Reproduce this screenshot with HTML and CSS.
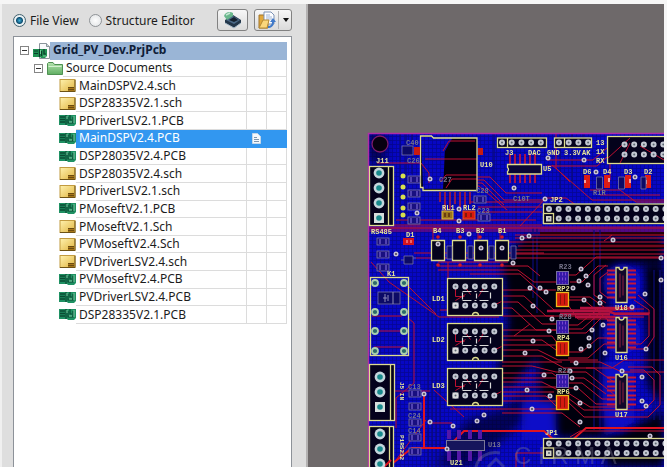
FILE: index.html
```
<!DOCTYPE html>
<html lang="en">
<head>
    <meta charset="UTF-8">
    <meta name="viewport" content="width=device-width, initial-scale=1.0">
    <title>Grid_PV_Dev.PrjPcb</title>
    <link rel="stylesheet" href="styles.css">
</head>
<body>

<!-- Shared icons -->
<svg class="sprite" aria-hidden="true">
    <defs>
        <linearGradient id="sheetFill" x1="0" y1="0" x2="1" y2="1">
            <stop offset="0" stop-color="#fff2ae"/>
            <stop offset="1" stop-color="#e0b440"/>
        </linearGradient>
        <linearGradient id="folderFill" x1="0" y1="0" x2="0" y2="1">
            <stop offset="0" stop-color="#b5e3ae"/>
            <stop offset="1" stop-color="#5fae62"/>
        </linearGradient>
        <symbol id="icon-sch" viewBox="0 0 17 13">
            <rect x="1" y="0.5" width="15" height="12" fill="url(#sheetFill)" stroke="#c29b40"/>
            <path d="M1 12.5h15V1" fill="none" stroke="#6d5214"/>
            <path d="M9 8h6v4H9z" fill="#a87618"/>
            <path d="M9 8.500h6M9 10.500h6" stroke="#6b4c10"/>
        </symbol>
        <symbol id="icon-pcb" viewBox="0 0 17 13">
            <path d="M0 1h17v9l-2 2H9l-1-1H0z" fill="#1f9163"/>
            <path d="M1 3h5M1 5.500h5M1 8h5" stroke="#0b4a33" stroke-width="1.300"/>
            <path d="M7 1v10M9 3v6h5V3M11 1v5h2" fill="none" stroke="#0a4a33" stroke-width="1.200"/>
            <path d="M10 8h3M15 2v7M8 2v3" stroke="#7cc9a2"/>
        </symbol>
        <symbol id="icon-folder" viewBox="0 0 16 13">
            <path d="M0.500 12.500v-11l1-1h4.500l1.500 2h8v10z" fill="url(#folderFill)" stroke="#4f9152"/>
            <path d="M1.500 4.500h13" stroke="#d4f0cf"/>
        </symbol>
        <symbol id="icon-project" viewBox="0 0 17 16">
            <path d="M6.500 0.500h7l3 3v12h-10z" fill="#f8fafb" stroke="#8a949b"/>
            <path d="M13.500 0.500v3h3" fill="#cdd5da" stroke="#8a949b"/>
            <path d="M0 6h14v7l-2 2H8l-1-1H0z" fill="#1f9152"/>
            <path d="M1 8h4M1 10.500h4M6.500 6v8M8.500 8v5M11 6v5h2" fill="none" stroke="#0b3d2b" stroke-width="1.200"/>
            <path d="M10 13h3M7.500 7v4" stroke="#6fce96"/>
        </symbol>
    </defs>
</svg>

<main class="workspace">
    <section class="panel">
        <div class="toolbar">
            <label class="view-option"><input type="radio" name="view" checked> File View</label>
            <label class="view-option"><input type="radio" name="view"> Structure Editor</label>
            <div class="toolbar-buttons">
                <button class="tool-btn" aria-label="Compile">
                    <svg width="20" height="18" viewBox="0 0 20 18">
                        <path d="M2 9l8-5 8 5v3l-7 5-9-5z" fill="#24374a"/>
                        <path d="M2 12l9 5 7-5" fill="none" stroke="#a9bccb"/>
                        <path d="M3 9l7-4 7 4-6 4z" fill="#4b6a88"/>
                        <path d="M6 9l5-3 4 3-4 2z" fill="#15212e"/>
                        <path d="M1 5c1-4 6-5 9-3v3l-6 4z" fill="#69b78c"/>
                        <path d="M3 4l4-2" stroke="#c5e6d3" stroke-width="1.500"/>
                    </svg>
                </button>
                <button class="tool-btn tool-btn-split" aria-label="Open document">
                    <svg width="18" height="18" viewBox="0 0 18 18">
                        <path d="M1 4h5l1 2h3v11H1z" fill="#e2a83a" stroke="#a0752b"/>
                        <path d="M6 1h7l3 3v9H6z" fill="#fdfdff" stroke="#7d93b5"/>
                        <path d="M8 4h4M8 6h6M8 8h6" stroke="#9db4d5"/>
                        <path d="M1 17l4-8h6l-2 8z" fill="#fbd77b" stroke="#b58935"/>
                        <path d="M10 15c3 0 4-2 4-4h-2l3-4 3 4h-2c0 4-3 6-6 6z" fill="#3f79c9"/>
                    </svg>
                    <span class="split-line"></span>
                    <span class="caret"></span>
                </button>
            </div>
        </div>

        <div class="tree-box">
            <table class="tree">
                <colgroup>
                    <col class="col-root"><col class="col-folder"><col class="col-file"><col>
                    <col class="col-status"><col class="col-status">
                </colgroup>
                <tbody>
                    <tr class="root">
                        <td class="lead"><button class="toggle" aria-label="Collapse project"></button><svg width="17" height="16"><use href="#icon-project"/></svg></td>
                        <td class="name" colspan="5">Grid_PV_Dev.PrjPcb</td>
                    </tr>
                    <tr>
                        <td class="lead" colspan="2"><button class="toggle" aria-label="Collapse folder"></button><svg width="16" height="13"><use href="#icon-folder"/></svg></td>
                        <td class="name" colspan="2">Source Documents</td><td></td><td></td>
                    </tr>
                    <tr>
                        <td class="lead" colspan="3"><svg width="17" height="13"><use href="#icon-sch"/></svg></td>
                        <td class="name">MainDSPV2.4.sch</td><td></td><td></td>
                    </tr>
                    <tr>
                        <td class="lead" colspan="3"><svg width="17" height="13"><use href="#icon-sch"/></svg></td>
                        <td class="name">DSP28335V2.1.sch</td><td></td><td></td>
                    </tr>
                    <tr>
                        <td class="lead" colspan="3"><svg width="17" height="13"><use href="#icon-pcb"/></svg></td>
                        <td class="name">PDriverLSV2.1.PCB</td><td></td><td></td>
                    </tr>
                    <tr class="selected">
                        <td class="lead" colspan="3"><svg width="17" height="13"><use href="#icon-pcb"/></svg></td>
                        <td class="name">MainDSPV2.4.PCB</td>
                        <td class="status">
                            <svg width="9" height="11" viewBox="0 0 9 11">
                                <path d="M0.500 0.500h5l3 3v7h-8z" fill="#f4f8fc" stroke="#c3d6e8"/>
                                <path d="M2 4.500h3M2 6.500h5M2 8.500h5" stroke="#7d95ad"/>
                            </svg>
                        </td>
                        <td></td>
                    </tr>
                    <tr>
                        <td class="lead" colspan="3"><svg width="17" height="13"><use href="#icon-pcb"/></svg></td>
                        <td class="name">DSP28035V2.4.PCB</td><td></td><td></td>
                    </tr>
                    <tr>
                        <td class="lead" colspan="3"><svg width="17" height="13"><use href="#icon-sch"/></svg></td>
                        <td class="name">DSP28035V2.4.sch</td><td></td><td></td>
                    </tr>
                    <tr>
                        <td class="lead" colspan="3"><svg width="17" height="13"><use href="#icon-sch"/></svg></td>
                        <td class="name">PDriverLSV2.1.sch</td><td></td><td></td>
                    </tr>
                    <tr>
                        <td class="lead" colspan="3"><svg width="17" height="13"><use href="#icon-pcb"/></svg></td>
                        <td class="name">PMoseftV2.1.PCB</td><td></td><td></td>
                    </tr>
                    <tr>
                        <td class="lead" colspan="3"><svg width="17" height="13"><use href="#icon-sch"/></svg></td>
                        <td class="name">PMoseftV2.1.Sch</td><td></td><td></td>
                    </tr>
                    <tr>
                        <td class="lead" colspan="3"><svg width="17" height="13"><use href="#icon-sch"/></svg></td>
                        <td class="name">PVMoseftV2.4.Sch</td><td></td><td></td>
                    </tr>
                    <tr>
                        <td class="lead" colspan="3"><svg width="17" height="13"><use href="#icon-sch"/></svg></td>
                        <td class="name">PVDriverLSV2.4.sch</td><td></td><td></td>
                    </tr>
                    <tr>
                        <td class="lead" colspan="3"><svg width="17" height="13"><use href="#icon-pcb"/></svg></td>
                        <td class="name">PVMoseftV2.4.PCB</td><td></td><td></td>
                    </tr>
                    <tr>
                        <td class="lead" colspan="3"><svg width="17" height="13"><use href="#icon-pcb"/></svg></td>
                        <td class="name">PVDriverLSV2.4.PCB</td><td></td><td></td>
                    </tr>
                    <tr>
                        <td class="lead" colspan="3"><svg width="17" height="13"><use href="#icon-pcb"/></svg></td>
                        <td class="name">DSP28335V2.1.PCB</td><td></td><td></td>
                    </tr>
                </tbody>
            </table>
        </div>
    </section>

    <section class="canvas">
        <svg class="board" viewBox="308 4 356 463" preserveAspectRatio="xMinYMin slice" role="img" aria-label="PCB layout">
            <defs>
                <pattern id="copper" width="4" height="4" patternUnits="userSpaceOnUse">
                    <rect width="4" height="4" fill="#0707c4"/>
                    <path d="M0 0h4M0 0v4" stroke="#050590" stroke-width="1.400"/>
                </pattern>
                <clipPath id="outline"><rect x="368" y="133" width="300" height="340"/></clipPath>
                <filter id="soft" x="-20%" y="-20%" width="140%" height="140%"><feGaussianBlur stdDeviation="4"/></filter>
                <g id="via"><circle r="2.500" fill="#c9c3d6"/><circle r="1" fill="#4a4252"/></g>
                <g id="bigpad"><circle r="5.400" fill="#c4d6dc"/><circle r="2.800" fill="#178a8c"/></g>
                <g id="bigsquare"><path d="M-5-5H5V5H-5z" fill="#d5dedc"/><circle r="2.800" fill="#178a8c"/></g>
                <!-- 10 pin display header -->
                <g id="ld">
                    <rect x="0" y="0" width="55" height="37" class="dark silk"/>
                    <path d="M8 8v10h9M17 8l6 8M37 8l-6 10M46 27l8-4M8 22l10-6" class="trace"/>
                    <path d="M8 8h39.500M8 27h39.500" class="hole"/>
                    <rect x="5" y="24" width="6" height="6" fill="#dadada"/>
                    <path d="M8 8h39.500M8 27h39.500" class="drill"/>
                    <path d="M15 13h14M32 13h11M15 22h14M32 22h11M15 14v7M29 15v5M43 14v6" class="silk-dash"/>
                    <path d="M25 37a3 3 0 0 1 6 0" class="silk"/>
                </g>
                <!-- resistor pack pair -->
                <g id="rp">
                    <rect x="0" y="0" width="12" height="13" fill="#3518a8" stroke="#77709b"/>
                    <path d="M3 1v11M6 1v11M9 1v11" stroke="#7b46cf" stroke-dasharray="3 2"/>
                    <rect x="0" y="21" width="12" height="14" fill="#d31a10" stroke="#f0b81a" stroke-width="1.300"/>
                    <path d="M4 23v10M8 23v10" stroke="#8b1408"/>
                </g>
                <g id="soic">
                    <path d="M-9 3h8M-9 7h8M-9 12h8M-9 16h8M-9 21h8M-9 25h8M-9 30h8M12 3h8M12 7h8M12 12h8M12 16h8M12 21h8M12 25h8M12 30h8" stroke="#c41638" stroke-width="2"/>
                    <path d="M0 0h3a2.500 2.500 0 0 0 5 0h3v35H0z" fill="#12082a" class="silk"/>
                    <path d="M4 6v24M7 8v20" stroke="#93203f"/>
                </g>
                <g id="cap"><rect width="12" height="7" fill="#190f80" stroke="#7b74a8" stroke-width="0.800"/><path d="M3 1v5M9 1v5" stroke="#6554c2" stroke-width="1.500"/></g>
            </defs>

            <g clip-path="url(#outline)">
            <rect x="368" y="133" width="300" height="340" fill="url(#copper)"/>

            <!-- areas without copper -->
            <g filter="url(#soft)" fill="#030010">
                <path d="M525 236h139v28h-30l-22 8-6 60-50 4-46 52-14-8 12-57-6-60z"/>
                <path d="M536 334h70l-4 76 16 28h-62l-16-34z"/>
                <path d="M644 266h20v140l-16-20z"/>
                <path d="M436 467l30-46 36-12 30-25-6 36-56 47z" opacity="0.600"/>
                <path d="M606 440l58-30v57h-58z"/>
                <path d="M368 133h18v30h-18z" opacity="0.600"/>
            </g>
            <g filter="url(#soft)" fill="#0a0ac8">
                <circle cx="622" cy="283" r="19"/>
                <circle cx="622" cy="335" r="19"/>
                <path d="M602 362h32v60l-30 16z"/>
                <path d="M522 400h34v40h-34z"/>
            </g>
            <rect x="369" y="226" width="295" height="6" fill="#a00b5c" opacity="0.500"/>
            <path d="M540 234h124M540 246h124" stroke="#25000a" stroke-width="4"/>

            <!-- blue layer tracks -->
            <path d="M428 262v205M432 262v205M436 262v205M440 262v205M533 228v70M537 228v85M400 134v90M406 134v90M412 134v40M494 134v80M516 186v40M560 134v55M572 134v55M583 134v55M594 230v200M600 230v200M654 270v150M660 270v150" class="blue"/>

            <!-- top layer tracks -->
            <g class="trace">
                <path d="M370 228h294M370 225h172M396 220h140M482 212h60M478 207h64M470 202h72"/>
                <path d="M425 159h52M377 163h44l8 10M370 196l12 18M371 262l18 20 50 35h60"/>
                <path d="M448 180h36l20 20h40M450 177h40l16 16h36M452 183h30l22 22M455 186h24l28 24"/>
                <path d="M520 226l26-28h20l14 10h84M552 165l40 35h72M547 160h46l14-12M547 166h50l18-16M556 134v34l14 14"/>
                <path d="M590 190h30l16 12h28M600 195h60M618 150l-8 10v20M635 142l10 20h19"/>
                <path d="M515 235h149M515 238h149M500 242h164M518 246h146M512 250h152M512 254h152M508 258h156M612 235l-8 6"/>
                <path d="M416 258h94M414 253h130M438 262h70M438 266h90l12 10M438 270h80l16 12h22M470 274h50l18 16h18M448 262v26h8"/>
                <path d="M502 290h30l22 20h80M502 296h22l22 20h64M502 302h16l24 22h16M502 308h10l24 22h20M502 316h52"/>
                <path d="M440 310h10M502 330h54M502 336h50l6 8M502 340h40l14 10M502 345h54M502 350h36l20 10h40"/>
                <path d="M502 356h40l22 12h30l20 14M502 362h60M502 366h30l24 6h30l30 24M502 373h50l8 6"/>
                <path d="M502 378h54M502 382h40l16 8M502 387h54M502 392h52M502 396h44l10 10M502 401h54M450 409h106"/>
                <path d="M568 275h8l20-18h68M570 282h12l16-16h10M570 297h20l18 13h10M568 300h16l24 20M568 305l10 14h36M568 325h10l20-16h46M568 329h14l18-16h50"/>
                <path d="M568 333h18l16-16h42M568 352h14l16-14h18M568 358h20l16-14h12M568 378h16l22 16M568 383h14l20 16h14M568 388h10l18 16h20M568 398l16 12h60l10-10v-20l-10-10h-14"/>
                <path d="M568 402l16 15h64l12-12v-30l-8-8h-24M586 368h26l12-8h40M570 362h30l22 10h42M568 393l22 14h40"/>
                <path d="M634 300l15 10v26l-8 8h-12M638 295l16 14v28l-8 12h-16M606 265l-12 10v20l12 8M608 272l-8 6v14l8 6"/>
                <path d="M372 316h30M374 347h30M374 331h30M408 318l6 5v60l-18 15v30M404 282l32 32M434 390l30 27"/>
                <path d="M390 391h40M428 423h24M502 413h60l18 14M396 460l30-40M516 467v-14h28M524 467v-10"/>
                <path d="M530 324l-16 12M460 250v10M478 228v14M500 228v14M433 228v14"/>
            </g>
            <path d="M547 311h62l6 3h34M560 314h50M580 308h54M575 317h40" stroke="#b31140" stroke-width="2.500" fill="none"/>
            <path d="M424 394v54M388 467l24-19h35l17-17h80l12 11h14l16-14h78" class="thick"/>
            <path d="M570 437l10-6h84M368 452l20-15" class="trace"/>
            </g>
            <path d="M368.500 467V133.500H664" fill="none" stroke="#b02ca8" stroke-width="1.500"/>

            <!-- top left block -->
            <circle cx="380" cy="144" r="8" fill="#07000f" stroke="#7d1a6c" stroke-width="1.300"/>
            <rect x="369.500" y="166.500" width="24" height="59" class="dark silk"/>
            <path d="M388.500 167v58" class="silk"/>
            <use href="#bigpad" x="379" y="173"/><use href="#bigpad" x="379" y="188"/><use href="#bigpad" x="379" y="203"/><use href="#bigsquare" x="379" y="218"/>
            <path d="M420.500 136h11l2 2h43.500v52.500h-54v-3h-2.500z" fill="#02000c"/>
            <path d="M421 137h32l-8 14-2 38h-20z" fill="url(#copper)"/>
            <path d="M425 159h52M421 163l8 10v10M443 151l6-10h26" class="trace"/>
            <path d="M440 182l6-7h31M446 188l6-9h25" class="trace"/>
            <path d="M420.500 136h11l2 2h43.500v52.500h-54v-3h-2.500z" class="silk"/>
            <path d="M414 147h6v8h-6zM478 148h5v7h-5z" fill="#c91b10"/>
            <rect x="402" y="146" width="11" height="9" class="ghost"/>
            <path d="M440 192v10M445 192v22M450 192v18M455 192v12M460 192v20M465 192v16M470 192v12" stroke="#b8202c" stroke-width="1.500"/>
            <use href="#cap" x="408" y="176"/><use href="#cap" x="408" y="190"/><use href="#cap" x="408" y="203"/><use href="#cap" x="408" y="217"/>
            <use href="#cap" x="474" y="196"/><use href="#cap" x="478" y="214"/>
            <rect x="442" y="211" width="11" height="8" fill="#9a741c" stroke="#e3c03a"/>
            <rect x="463" y="211" width="12" height="8" fill="#d8180d" stroke="#e0551f"/>
            <path d="M445 213v4M449 213v4M466 213v4M471 213v4" stroke="#4c1a08" stroke-width="1.200"/>

            <!-- top headers -->
            <rect x="497.500" y="138" width="49" height="9.500" class="dark silk"/>
            <path d="M507.500 138v9" class="silk"/>
            <path d="M502 142.500h40" class="hole"/><path d="M502 142.500h40" class="drill"/>
            <rect x="554.500" y="138" width="37" height="9.500" class="dark silk"/>
            <path d="M564.500 138v9" class="silk"/>
            <path d="M559 142.500h30" class="hole"/><path d="M559 142.500h30" class="drill"/>
            <path d="M510 154v10M515 154v10M520 154v10M525 154v10M530 154v10M535 154v10M510 174v9M515 174v9M520 174v9M525 174v9M530 174v9M535 174v9" stroke="#a3124d" stroke-width="2"/>
            <path d="M507.500 164.500h34v9.500h-34v-2.500a2.500 2.500 0 0 0 0-4z" fill="#0a0836" class="silk"/>
            <rect x="607.500" y="136.500" width="70" height="27" class="dark silk"/>
            <path d="M608 158l22-20M620 163l10-20M664 160l-24-14" class="trace"/>
            <path d="M624.500 144.500h50M624.500 154.500h50" class="hole"/><path d="M624.500 144.500h50M624.500 154.500h50" class="drill"/>
            <path d="M584 175h6v13h-6zM604 175h6v13h-6zM625 175h6v13h-6zM645 175h6v13h-6z" fill="#de1c14"/>
            <path d="M585 180v3M609 178v4M630 179v4M646 180v4" stroke="#fff" stroke-width="1.200"/>
            <path d="M596.500 177h6v12h-6zM618.500 177h6v12h-6zM641 177h5v12h-5z" class="ghost"/>

            <!-- JP2 / JP1 -->
            <rect x="543.500" y="204" width="130" height="19.500" class="dark silk"/>
            <path d="M549 209h125M549 218.500h125" class="hole"/>
            <rect x="543.500" y="213.500" width="10" height="10" class="dark silk"/>
            <rect x="546" y="216" width="5.500" height="5.500" fill="#d4d4c8"/>
            <path d="M549 209h125M549 218.500h125" class="drill"/>
            <rect x="543.500" y="438.500" width="130" height="19.500" class="dark silk"/>
            <path d="M549 443.500h125M549 453h125" class="hole"/>
            <rect x="543.500" y="448" width="10" height="10" class="dark silk"/>
            <rect x="546" y="450.500" width="5.500" height="5.500" fill="#d4d4c8"/>
            <path d="M549 443.500h125M549 453h125" class="drill"/>

            <!-- B4 - B1 -->
            <path d="M431.500 240.500h13v20h-13zM452.500 240.500h13v20h-13zM474.500 240.500h13v20h-13zM495.500 240.500h13v20h-13z" class="dark silk"/>
            <path d="M447 246h5v13h-5zM468 246h5v13h-5zM489 246h5v13h-5zM511 246h5v13h-5z" class="ghost"/>
            <g fill="#d31a24"><circle cx="438" cy="237" r="1.800"/><circle cx="460" cy="237" r="1.800"/><circle cx="480" cy="237" r="1.800"/><circle cx="502" cy="237" r="1.800"/><circle cx="438" cy="265" r="1.800"/><circle cx="460" cy="265" r="1.800"/><circle cx="480" cy="265" r="1.800"/><circle cx="502" cy="265" r="1.800"/></g>
            <path d="M403 238h11v7h-11z" fill="#d3131c"/>
            <path d="M407 240v3M411 240v3" stroke="#ffb8b8"/>
            <use href="#cap" x="377" y="238"/><use href="#cap" x="377" y="251"/><use href="#cap" x="377" y="264"/>
            <path d="M404 256h9v8h-9zM401 260h3M413 258h3" class="ghost"/>

            <!-- K1 -->
            <rect x="370.500" y="277.500" width="38" height="78" class="silk"/>
            <rect x="378" y="292" width="22" height="12" class="ghost"/>
            <path d="M393 292v12M383 298h4M385 294v8M388 295v6" stroke="#8f8bb9"/>
            <g class="green-pads"><circle cx="375" cy="283" r="3"/><circle cx="404" cy="283" r="3"/><circle cx="375" cy="312" r="3"/><circle cx="404" cy="312" r="3"/><circle cx="375" cy="331" r="3"/><circle cx="404" cy="331" r="3"/><circle cx="375" cy="351" r="3"/><circle cx="404" cy="351" r="3"/></g>

            <!-- left connectors -->
            <rect x="369.500" y="364.500" width="25" height="56" class="dark silk"/>
            <path d="M390.500 365v55" class="silk"/>
            <use href="#bigpad" x="380" y="377"/><use href="#bigpad" x="380" y="392"/><use href="#bigsquare" x="380" y="407"/>
            <rect x="369.500" y="426.500" width="24" height="50" class="dark silk"/>
            <path d="M389.500 427v44" class="silk"/>
            <path d="M384 467l7-7" class="thick"/>
            <use href="#bigpad" x="380" y="434"/><use href="#bigpad" x="380" y="449"/><use href="#bigpad" x="380" y="464"/>
            <use href="#cap" x="409" y="390"/><use href="#cap" x="409" y="403"/><use href="#cap" x="409" y="419"/><use href="#cap" x="409" y="434"/><use href="#cap" x="409" y="448"/>

            <!-- displays, packs and drivers -->
            <use href="#ld" x="447.500" y="278.500"/><use href="#ld" x="447.500" y="323.500"/><use href="#ld" x="447.500" y="368.500"/>
            <use href="#rp" x="556.500" y="271.500"/><use href="#rp" x="556.500" y="320.500"/><use href="#rp" x="556.500" y="374.500"/>
            <use href="#soic" x="616" y="267.500"/><use href="#soic" x="616" y="317.500"/><use href="#soic" x="616" y="374.500"/>
            <path d="M449 430v9M459 430v9M470 430v9M480 430v9M449 451v10M459 451v10M470 451v10M480 451v10" stroke="#5317a8" stroke-width="4"/>
            <rect x="446.500" y="440.500" width="38" height="10" fill="#16165c" stroke="#7b7898"/>

            <g>
                <use href="#via" x="430" y="179"/><use href="#via" x="548" y="158"/><use href="#via" x="584" y="160"/><use href="#via" x="514" y="188"/><use href="#via" x="545" y="199"/><use href="#via" x="459" y="209"/><use href="#via" x="459" y="221"/>
                <use href="#via" x="596" y="172"/><use href="#via" x="635" y="177"/><use href="#via" x="417" y="213"/><use href="#via" x="396" y="254"/><use href="#via" x="438" y="244"/><use href="#via" x="469" y="234"/><use href="#via" x="481" y="248"/><use href="#via" x="502" y="248"/>
                <use href="#via" x="522" y="238"/><use href="#via" x="529" y="236"/><use href="#via" x="613" y="240"/><use href="#via" x="513" y="263"/><use href="#via" x="661" y="258"/><use href="#via" x="661" y="280"/>
                <use href="#via" x="530" y="288"/><use href="#via" x="540" y="288"/><use href="#via" x="546" y="292"/><use href="#via" x="533" y="306"/><use href="#via" x="552" y="319"/><use href="#via" x="549" y="331"/><use href="#via" x="533" y="341"/><use href="#via" x="525" y="353"/>
                <use href="#via" x="581" y="269"/><use href="#via" x="586" y="276"/><use href="#via" x="579" y="281"/><use href="#via" x="588" y="285"/><use href="#via" x="573" y="288"/><use href="#via" x="584" y="300"/><use href="#via" x="600" y="297"/><use href="#via" x="600" y="303"/>
                <use href="#via" x="645" y="294"/><use href="#via" x="632" y="307"/><use href="#via" x="603" y="325"/><use href="#via" x="592" y="330"/><use href="#via" x="589" y="338"/><use href="#via" x="589" y="346"/><use href="#via" x="581" y="349"/><use href="#via" x="605" y="353"/><use href="#via" x="646" y="349"/>
                <use href="#via" x="576" y="363"/><use href="#via" x="570" y="371"/><use href="#via" x="572" y="378"/><use href="#via" x="544" y="375"/><use href="#via" x="527" y="390"/><use href="#via" x="550" y="396"/><use href="#via" x="532" y="409"/><use href="#via" x="576" y="388"/><use href="#via" x="580" y="403"/><use href="#via" x="580" y="422"/>
                <use href="#via" x="622" y="371"/><use href="#via" x="642" y="377"/><use href="#via" x="642" y="401"/><use href="#via" x="646" y="406"/><use href="#via" x="650" y="436"/>
                <use href="#via" x="424" y="394"/><use href="#via" x="430" y="422"/><use href="#via" x="453" y="426"/><use href="#via" x="477" y="421"/><use href="#via" x="484" y="415"/><use href="#via" x="447" y="449"/>
            </g>
            <g fill="#d7e04c"><circle cx="403" cy="176" r="2.500"/><circle cx="403" cy="187" r="2.500"/><circle cx="403" cy="197" r="2.500"/><circle cx="403" cy="208" r="2.500"/><circle cx="403" cy="215" r="2.500"/></g>

            <!-- reference names -->
            <g class="ref">
                <text x="376" y="163">J11</text><text x="371" y="234">RS485</text>
                <text x="480" y="167">U10</text><text x="505" y="155">J3</text><text x="528" y="155">DAC</text>
                <text x="547" y="155">GND</text><text x="564" y="155">3.3V</text><text x="582" y="155">AK</text>
                <text x="543" y="171">U5</text><text x="583" y="174">D6</text><text x="603" y="174">D4</text><text x="624" y="174">D3</text><text x="644" y="174">D2</text>
                <text x="550" y="202">JP2</text><text x="442" y="210">RL1</text><text x="463" y="210">RL2</text>
                <text x="433" y="233">B4</text><text x="456" y="233">B3</text><text x="476" y="233">B2</text><text x="498" y="233">B1</text>
                <text x="406" y="237">D1</text><text x="387" y="276">K1</text>
                <text x="432" y="301">LD1</text><text x="432" y="342">LD2</text><text x="432" y="388">LD3</text>
                <text x="557" y="291">RP2</text><text x="557" y="340">RP4</text><text x="557" y="394">RP6</text>
                <text x="615" y="310">U18</text><text x="615" y="360">U16</text><text x="615" y="417">U17</text>
                <text x="545" y="435">JP1</text><text x="450" y="465">U21</text>
                <text x="596" y="145">13</text><text x="596" y="154">1X</text><text x="596" y="163">RX</text>
                <text class="upright" x="401" y="382">J5 IN</text><text class="upright" x="401" y="435">P1RS232</text>
            </g>
            <g class="ref dim">
                <text x="406" y="145">C40</text><text x="407" y="163">C26</text><text x="439" y="182">C27</text><text x="476" y="193">C28</text><text x="477" y="213">C23</text>
                <text x="513" y="201">C10T</text><text x="593" y="195">R1R</text><text x="559" y="269">R23</text><text x="559" y="319">R28</text><text x="558" y="373">R21</text>
                <text x="408" y="389">C13</text><text x="408" y="418">C24</text><text x="408" y="433">C14</text><text x="488" y="447">U13</text>
            </g>
            <path d="M476 467c2-10 12-16 24-14M488 467l8-8 8 8" fill="none" stroke="#8d8da0" stroke-width="3" opacity="0.300"/>
            <text class="watermark" x="514" y="464">C I R M A</text>
        </svg>
    </section>
</main>

</body>
</html>
```

FILE: styles.css
```
* {
    box-sizing: border-box;
}

body {
    margin: 0;
    background-color: #f6f6f6;
    font-family: "Noto Sans", "Open Sans", sans-serif;
    font-size: 12px;
    color: #1c1c1c;
}

.sprite {
    position: absolute;
    width: 0;
    height: 0;
}

.workspace {
    display: flex;
    height: 100vh;
    padding: 4px 3px 0 0;
}

/* Left panel */
.panel {
    display: flex;
    flex-direction: column;
    flex: 0 0 308px;
    padding: 0 14px 0 11px;
    background-color: #dedede;
    border-left: 2px solid #f0f0f0;
    border-right: 2px solid #b4b2b2;
}

.toolbar {
    display: flex;
    align-items: center;
    height: 32px;
    gap: 10px;
}

.view-option {
    display: flex;
    align-items: center;
    gap: 4px;
    white-space: nowrap;
}

.view-option input {
    appearance: none;
    width: 13px;
    height: 13px;
    margin: 0;
    border: 1px solid #8f9397;
    border-radius: 50%;
    background: radial-gradient(#fdfdfd, #dfe2e4);
}

.view-option input:checked {
    border-color: #44626f;
    background: radial-gradient(circle, #3fb3dd 0, #0e4d70 3px, #eef4f6 4px, #dbe6ea 6px);
}

.toolbar-buttons {
    display: flex;
    gap: 6px;
    margin-left: auto;
}

.tool-btn {
    display: flex;
    align-items: center;
    justify-content: center;
    width: 31px;
    height: 22px;
    padding: 0;
    border: 1px solid #828282;
    border-radius: 3px;
    background: linear-gradient(#f7f7f7, #dadada);
}

.tool-btn-split {
    width: 38px;
    gap: 2px;
}

.split-line {
    width: 1px;
    height: 18px;
    background-color: #b5b5b5;
}

.caret {
    margin-left: 2px;
    border: 3px solid transparent;
    border-top: 4px solid #111;
    border-bottom: 0;
}

/* Project tree */
.tree-box {
    flex: 1;
    padding: 5px 4px 0 0;
    background-color: #fff;
    border: 1px solid #8d9299;
    border-bottom: 0;
}

.tree {
    width: 100%;
    height: 282px;
    table-layout: fixed;
    border-collapse: collapse;
}

.col-root {
    width: 36px;
}

.col-folder {
    width: 13px;
}

.col-file {
    width: 13px;
}

.col-status {
    width: 20px;
}

.tree td {
    padding: 0;
    line-height: 16px;
    border-right: 1px solid #dcdcdc;
    border-bottom: 1px solid #dcdcdc;
}

.tree .lead {
    text-align: right;
    white-space: nowrap;
    line-height: 0;
    border: 0;
}

.tree .lead svg {
    vertical-align: middle;
}

.tree .name {
    padding-left: 3px;
    white-space: nowrap;
}

.tree .status {
    text-align: center;
    line-height: 0;
}

.root .name {
    font-weight: bold;
    color: #0f2038;
    background-color: #9ab5d6;
    border-color: #9ab5d6;
}

.selected td:not(.lead) {
    color: #fff;
    background-color: #3297f0;
    border-color: #3297f0;
}

.toggle {
    width: 9px;
    height: 9px;
    margin-right: 4px;
    padding: 0;
    vertical-align: middle;
    border: 1px solid #858585;
    background: linear-gradient(#333, #333) center / 5px 1px no-repeat #fff;
}

/* Board */
.canvas {
    flex: 1;
    min-width: 0;
    background-color: #6e696a;
    overflow: hidden;
}

.board {
    display: block;
    width: 100%;
    height: 100%;
}

.silk {
    stroke: #dedc8e;
    stroke-width: 1.3;
}

.silk:not([fill]):not(.dark) {
    fill: none;
}

.dark {
    fill: #04021c;
}

.silk-dash {
    fill: none;
    stroke: #d8d8d8;
    stroke-width: 1.2;
    stroke-dasharray: 9 3;
}

.ghost {
    fill: #0c0a66;
    stroke: #7672a6;
    stroke-width: 0.8;
}

.trace {
    fill: none;
    stroke: #bd1030;
    stroke-width: 1;
}

.thick {
    fill: none;
    stroke: #df1420;
    stroke-width: 2;
}

.blue {
    fill: none;
    stroke: #0a0a78;
    stroke-width: 1.2;
}

.hole,
.drill {
    fill: none;
    stroke: #c3c7d2;
    stroke-width: 6;
    stroke-linecap: round;
    stroke-dasharray: 0 9.7;
}

.drill {
    stroke: #5b6670;
    stroke-width: 2;
}

.green-pads {
    fill: #2c6a6a;
    stroke: #a9cfae;
    stroke-width: 1.8;
}

.ref {
    font-family: "Liberation Mono", monospace;
    font-size: 7px;
    font-weight: bold;
    fill: #e8e69a;
}

.dim {
    fill: #77758c;
}

.upright {
    font-size: 6px;
    writing-mode: vertical-rl;
}

.watermark {
    font-family: "Liberation Sans", sans-serif;
    font-size: 24px;
    fill: #9a9aa8;
    opacity: 0.3;
}
```
